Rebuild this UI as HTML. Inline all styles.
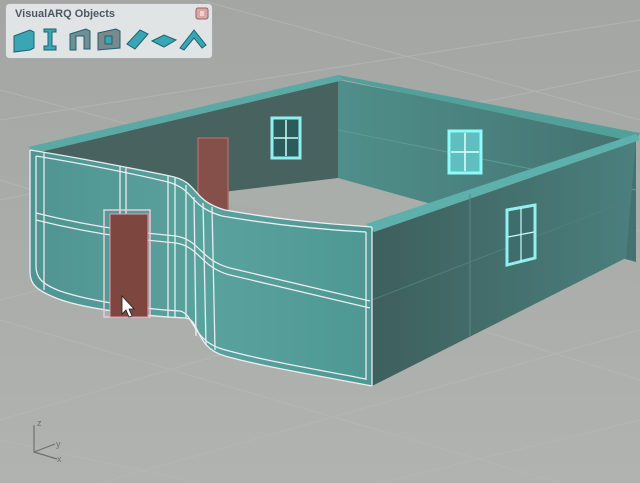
<!DOCTYPE html>
<html><head><meta charset="utf-8"><style>
html,body{margin:0;padding:0;width:640px;height:483px;overflow:hidden;background:#a8aba8;font-family:"Liberation Sans",sans-serif}
</style></head><body>
<svg width="640" height="483" viewBox="0 0 640 483" xmlns="http://www.w3.org/2000/svg" style="position:absolute;left:0;top:0">
<defs>
<linearGradient id="bg" x1="0" y1="0" x2="0" y2="1"><stop offset="0" stop-color="#a3a6a3"/><stop offset="1" stop-color="#b0b3b0"/></linearGradient>
<linearGradient id="cw" x1="0" y1="0" x2="1" y2="0"><stop offset="0" stop-color="#4f9490"/><stop offset="0.5" stop-color="#5aa29e"/><stop offset="1" stop-color="#4e9894"/></linearGradient>
<linearGradient id="rw" x1="0" y1="0" x2="1" y2="0"><stop offset="0" stop-color="#3e5f5d"/><stop offset="1" stop-color="#4a807d"/></linearGradient>
<linearGradient id="bi" x1="0" y1="0" x2="1" y2="0"><stop offset="0" stop-color="#4f8f8b"/><stop offset="1" stop-color="#44716f"/></linearGradient>
</defs>
<rect width="640" height="483" fill="url(#bg)"/>
<g stroke="#b6b9b6" stroke-width="1" opacity="0.7">
<line x1="0" y1="120" x2="640" y2="20"/><line x1="0" y1="200" x2="640" y2="70"/><line x1="0" y1="300" x2="640" y2="140"/>
<line x1="0" y1="420" x2="640" y2="230"/><line x1="100" y1="483" x2="640" y2="330"/><line x1="380" y1="483" x2="640" y2="420"/>
<line x1="0" y1="90" x2="640" y2="260"/><line x1="0" y1="180" x2="640" y2="380"/><line x1="0" y1="320" x2="560" y2="483"/>
<line x1="0" y1="440" x2="200" y2="483"/><line x1="200" y1="0" x2="640" y2="120"/>
</g>
<!-- back-left wall inner face -->
<polygon points="30,150 338,80 338,178 200,205 30,268" fill="#47625f"/>
<!-- floor -->
<polygon points="338,178 470,214 372,232 190,196" fill="#a9aeab"/>
<!-- back-right wall inner face -->
<polygon points="338,80 636,138 636,262 460,212 338,178" fill="url(#bi)"/>
<line x1="338" y1="130" x2="636" y2="190" stroke="#5c9a96" stroke-width="1"/>
<polygon points="28,147 338,75 344,80 36,153" fill="#5aa9a4"/>
<polygon points="338,75 640,133 636,142 344,80" fill="#53a09b"/>
<rect x="198" y="138" width="30" height="92" fill="#86504a" stroke="#a86a64" stroke-width="1.5"/>
<rect x="272" y="118" width="28" height="40" fill="#2d5a5a" stroke="#8ff0f0" stroke-width="3"/>
<line x1="286" y1="120" x2="286" y2="156" stroke="#c8ffff" stroke-width="1.5"/><line x1="274" y1="138" x2="298" y2="138" stroke="#c8ffff" stroke-width="1.5"/>
<rect x="449" y="131" width="32" height="42" fill="#5fbfbf" stroke="#8ffaf8" stroke-width="3"/>
<line x1="465" y1="133" x2="465" y2="171" stroke="#e0ffff" stroke-width="1.5"/><line x1="451" y1="152" x2="479" y2="152" stroke="#e0ffff" stroke-width="1.5"/>
<!-- front-right wall -->
<polygon points="372,227 636,138 626,258 372,386" fill="url(#rw)"/>
<polygon points="366,224 636,134 640,140 374,232" fill="#5db0ab"/>
<line x1="470" y1="194" x2="470" y2="336" stroke="#5a8a88" stroke-width="1"/>
<line x1="372" y1="300" x2="630" y2="200" stroke="#4f7f7d" stroke-width="1"/>
<polygon points="507,210 535,205 535,258 507,265" fill="#3e6d6c" stroke="#8ff0f0" stroke-width="3"/>
<line x1="521" y1="208" x2="521" y2="261" stroke="#c8ffff" stroke-width="1.2"/><line x1="508" y1="237" x2="534" y2="232" stroke="#c8ffff" stroke-width="1.2"/>
<!-- curved front wall -->
<path d="M30,150 C80,158 120,166 170,176 C200,182 190,200 225,210 C280,220 330,224 372,227 L372,386 C320,376 260,366 225,356 C195,348 200,320 186,318 C140,316 80,308 56,298 C36,290 30,284 30,272 Z" fill="url(#cw)"/>
<g fill="none" stroke="#f2f2f6" stroke-width="1.3" opacity="0.95">
<path d="M30,150 C80,158 120,166 170,176 C200,182 190,200 225,210 C280,220 330,224 372,227"/>
<path d="M36,156 C84,164 122,171 168,182 C196,190 188,206 222,216 C280,226 328,230 366,232"/>
<path d="M30,272 C30,284 36,290 56,298 C80,308 140,316 186,318 C200,320 195,348 225,356 C260,366 320,376 372,386"/>
<path d="M36,266 C36,278 42,284 60,291 C86,300 140,309 180,311 C194,314 192,340 222,349 C260,360 320,370 366,379"/>
<path d="M36,213 C80,224 130,232 176,236 C200,240 200,260 230,268 C290,282 330,292 370,301"/>
<path d="M36,220 C80,231 130,239 176,243 C200,247 200,267 230,275 C290,289 330,299 370,308"/>
<line x1="30" y1="150" x2="30" y2="272"/><line x1="36" y1="156" x2="36" y2="266"/>
<line x1="44" y1="152" x2="44" y2="290"/><line x1="120" y1="166" x2="120" y2="312"/>
<line x1="126" y1="168" x2="126" y2="313"/><line x1="168" y1="176" x2="168" y2="318"/>
<line x1="175" y1="178" x2="175" y2="318"/><line x1="186" y1="185" x2="186" y2="318"/>
<line x1="194" y1="197" x2="196" y2="336"/><line x1="203" y1="203" x2="206" y2="345"/>
<line x1="212" y1="207" x2="215" y2="350"/><line x1="366" y1="232" x2="366" y2="380"/>
<line x1="372" y1="227" x2="372" y2="386"/>
</g>
<rect x="104" y="210" width="46" height="107" fill="none" stroke="#f0c8d4" stroke-width="1.5"/>
<rect x="110" y="214" width="38" height="103" fill="#7d463f" stroke="#e0a0b0" stroke-width="1"/>
<path d="M122,296 L122,314 L126,310 L129,317 L132,316 L129,309 L134,309 Z" fill="#fff" stroke="#222" stroke-width="0.8"/>
<g stroke="#6e726e" stroke-width="1.2" fill="none"><path d="M34,425 L34,452 L55,444 M34,452 L57,459"/></g>
<text x="37" y="426" font-size="9" fill="#6e726e">z</text>
<text x="56" y="447" font-size="9" fill="#6e726e">y</text>
<text x="57" y="462" font-size="9" fill="#6e726e">x</text>
<rect x="5.5" y="3.5" width="207" height="55" rx="4" fill="#e0e4e4" stroke="#a6abb0"/>
<text x="15" y="17" font-size="11" font-weight="bold" fill="#4d5862">VisualARQ Objects</text>
<rect x="196" y="8" width="12" height="11" rx="2" fill="#d8a8a8" stroke="#a06060"/>
<rect x="200" y="11" width="4" height="5" fill="#f0d0d0"/>
<g fill="#3aa6b4" stroke="#1f6070" stroke-width="1">
<path d="M14,36 L30,30 L34,32 L34,48 L30,50 L14,52 Z"/>
<path d="M44,29 L56,29 L56,32 L52,32 L52,46 L56,46 L56,50 L44,50 L44,46 L48,46 L48,32 L44,32 Z"/>
<path d="M70,34 L86,29 L90,31 L90,49 L84,49 L84,36 L76,36 L76,50 L70,50 Z" fill="#6f8f94"/>
<path d="M98,33 L116,29 L120,31 L120,48 L98,50 Z" fill="#7a8a8c"/><rect x="105" y="36" width="7" height="8" fill="#3aa6b4"/>
<path d="M127,44 L140,30 L148,34 L135,49 Z"/>
<path d="M152,41 L164,35 L176,40 L164,47 Z"/>
<path d="M180,48 L194,30 L206,45 L202,48 L194,38 L184,50 Z"/>
</g>
</svg>
</body></html>
